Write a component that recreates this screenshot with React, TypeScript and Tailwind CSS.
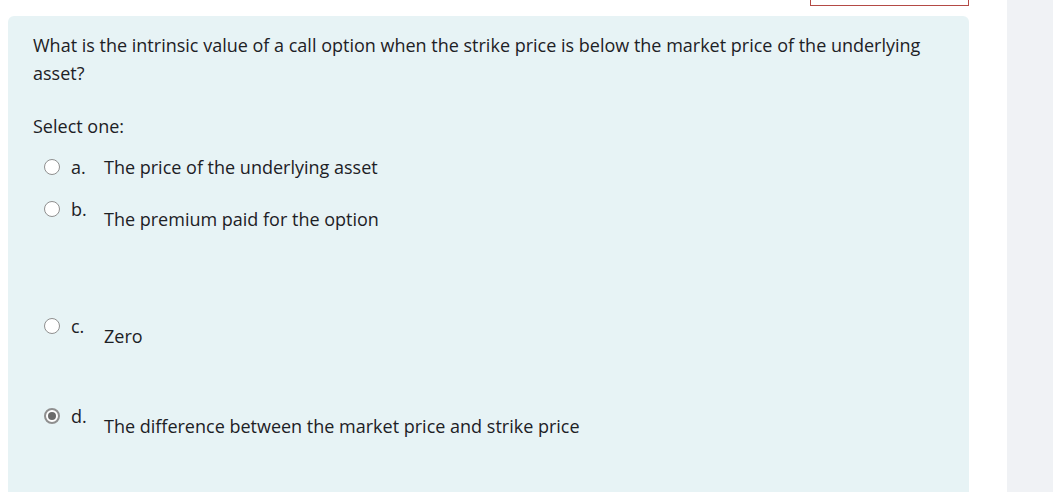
import React from 'react';

const options = [
  { letter: 'a.', text: 'The price of the underlying asset', shift: false, h: 'h-[42px]', checked: false },
  { letter: 'b.', text: 'The premium paid for the option', shift: true, h: 'h-[117px]', checked: false },
  { letter: 'c.', text: 'Zero', shift: true, h: 'h-[90px]', checked: false },
  { letter: 'd.', text: 'The difference between the market price and strike price', shift: true, h: 'h-[90px]', checked: true },
];

const Radio: React.FC<{ checked: boolean }> = ({ checked }) => (
  <span
    className={`w-[16px] h-[16px] rounded-full bg-white shrink-0 flex items-center justify-center ${
      checked ? 'border-2 border-[#8f8f8f]' : 'border border-[#8f8f8f]'
    }`}
  >
    {checked && <span className="w-[8px] h-[8px] rounded-full bg-[#6b6b6b]" />}
  </span>
);

const App: React.FC = () => {
  return (
    <div className="w-[1053px] h-[492px] bg-white flex overflow-hidden text-[#1d2125]" style={{ fontFamily: '"Open Sans", Lato, sans-serif' }}>
      <div className="flex-1 flex flex-col pl-2">
        <div className="flex justify-end pr-[38px]">
          <div className="w-[159px] h-[6px] border border-t-0 border-[#b44a45]" />
        </div>
        <div className="mt-[10px] w-[961px] flex-1 bg-[#e7f3f5] rounded-t-md pl-[25px] pt-[15px]">
          <p className="text-[18px] leading-[28px] pr-10">
            What is the intrinsic value of a call option when the strike price is below the market price of the underlying asset?
          </p>
          <p className="mt-[25px] text-[18px] leading-[28px]">Select one:</p>
          <div className="mt-[13px] flex flex-col">
            {options.map((o) => (
              <div key={o.letter} className={`flex items-start ${o.h}`}>
                <div className="flex items-center h-[28px] pl-[11px] w-[38px]">
                  <Radio checked={o.checked} />
                </div>
                <div className="h-[28px] leading-[28px] text-[18px] w-[33px]">{o.letter}</div>
                <div className={`text-[18px] leading-[28px] ${o.shift ? 'pt-[10px]' : ''}`}>{o.text}</div>
              </div>
            ))}
          </div>
        </div>
      </div>
      <div className="w-[46px] bg-[#f0f2f5]" />
    </div>
  );
};

export default App;
